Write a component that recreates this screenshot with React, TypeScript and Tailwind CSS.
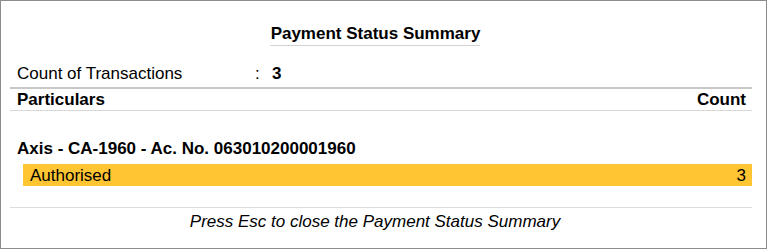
export default function App() {
  const font = { fontFamily: '"Liberation Sans", Arial, sans-serif' };
  return (
    <div className="w-[768px] h-[250px] bg-white">
      <div
        className="w-[767px] h-[249px] border border-[#8c8c8c] text-[17px] leading-[20px] text-black"
        style={font}
      >
        <div className="pl-[9px] w-[751px]">
          {/* title */}
          <div className="pt-[23px] pr-[12px] flex justify-center">
            <div className="h-[22px] border-b border-[#d2d2d2] font-bold pl-[1px]">Payment Status Summary</div>
          </div>

          {/* count row */}
          <div className="mt-[18px] h-[23px] flex pl-[7px]">
            <div className="w-[238px]">Count of Transactions</div>
            <div className="w-[17px]">:</div>
            <div className="font-bold">3</div>
          </div>

          {/* header */}
          <div className="border-t-2 border-[#c8c8c8] border-b h-[24px] pt-[1px] border-b-[#d8d8d8] flex justify-between pl-[7px] pr-[6px] font-bold">
            <div>Particulars</div>
            <div>Count</div>
          </div>

          {/* bank ledger */}
          <div className="mt-[28px] pl-[7px] font-bold">Axis - CA-1960 - Ac. No. 063010200001960</div>
          <div className="mt-[5px] ml-[13px] h-[22px] pt-[1px] leading-[21px] bg-[#ffc532] flex justify-between pl-[7px] pr-[6px]">
            <div>Authorised</div>
            <div>3</div>
          </div>

          {/* footer */}
          <div className="mt-[21px] border-t border-[#dcdcdc] pt-[4px] pr-[12px] text-center italic">
            Press Esc to close the Payment Status Summary
          </div>
        </div>
      </div>
    </div>
  );
}
